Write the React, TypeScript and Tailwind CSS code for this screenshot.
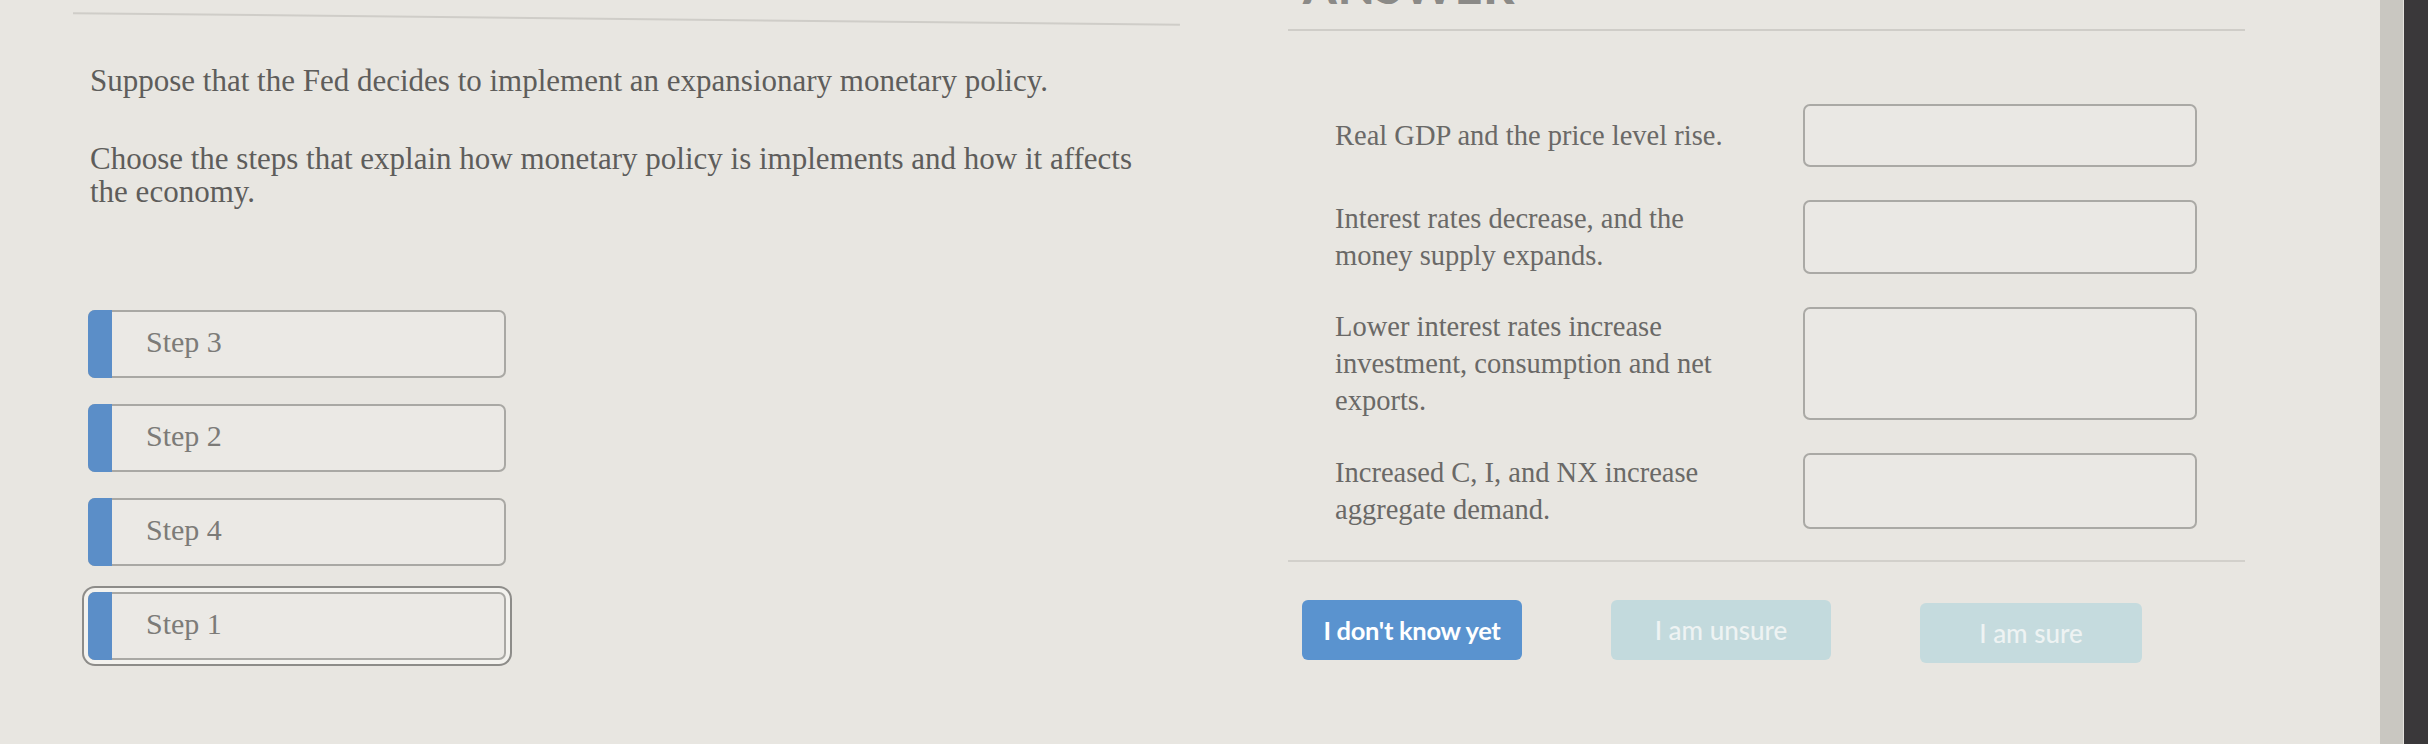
import React from "react";

const serif = "font-['Liberation_Serif',serif]";

const steps = [
  { label: "Step 3", focused: false },
  { label: "Step 2", focused: false },
  { label: "Step 4", focused: false },
  { label: "Step 1", focused: true },
];

const answers = [
  { lines: ["Real GDP and the price level rise."], h: "h-[63px]" },
  { lines: ["Interest rates decrease, and the", "money supply expands."], h: "h-[74px]" },
  {
    lines: ["Lower interest rates increase", "investment, consumption and net", "exports."],
    h: "h-[113px]",
  },
  { lines: ["Increased C, I, and NX increase", "aggregate demand."], h: "h-[76px]" },
];

const StepCard: React.FC<{ label: string; focused: boolean }> = ({ label, focused }) => (
  <div
    className={`ml-[15px] flex h-[68px] w-[418px] rounded-[7px] border-2 border-[#a9a8a4] bg-[#ebe9e5] ${
      focused ? "shadow-[0_0_0_4px_#f3f2ee,0_0_0_6px_#8d8c89]" : ""
    }`}
  >
    <div className="-my-[2px] -ml-[2px] w-[24px] rounded-l-[7px] bg-[#5b8ec8]" />
    <div className={`flex items-center pb-[5px] pl-[34px] text-[30px] text-[#7c7b78] ${serif}`}>{label}</div>
  </div>
);

export default function App() {
  return (
    <div className="flex h-[744px] w-[2428px] overflow-hidden bg-[#e8e6e1]">
      <div className="flex flex-1">
        {/* question */}
        <div className="ml-[73px] flex w-[1107px] flex-col">
          <div className="mt-[18px] h-[2px] rotate-[0.6deg] bg-[#cfcdc8]" />
          <div className={`mt-[44px] pl-[17px] text-[31px] leading-[33px] text-[#5e5d5b] ${serif}`}>
            <p>Suppose that the Fed decides to implement an expansionary monetary policy.</p>
            <p className="mt-[45px]">
              Choose the steps that explain how monetary policy is implements and how it affects
              <br />
              the economy.
            </p>
          </div>
          <div className="mt-[102px] flex flex-col gap-[26px]">
            {steps.map((s) => (
              <StepCard key={s.label} label={s.label} focused={s.focused} />
            ))}
          </div>
        </div>

        {/* answer */}
        <div className="ml-[108px] flex w-[957px] flex-col">
          <div className="flex h-[10px] items-end overflow-hidden pl-[15px]">
            <span className="font-['Lato',sans-serif] text-[48px] font-black leading-none tracking-[1px] text-[#8b8a87]">
              ANSWER
            </span>
          </div>
          <div className="mt-[19px] h-[2px] bg-[#cfcdc8]" />
          <div className="mt-[73px] flex flex-col gap-[33px]">
            {answers.map((a, i) => (
              <div key={i} className="flex items-center">
                <div className={`ml-[47px] w-[420px] text-[28.5px] leading-[37px] text-[#6a6967] ${serif}`}>
                  {a.lines.map((l, j) => (
                    <div key={j}>{l}</div>
                  ))}
                </div>
                <div className={`ml-[48px] w-[394px] rounded-[7px] border-2 border-[#aaa9a5] bg-[#eae8e4] ${a.h}`} />
              </div>
            ))}
          </div>
          <div className="mt-[31px] h-[2px] bg-[#d2d0cb]" />
          <div className="ml-[14px] mt-[38px] flex gap-[89px] font-['Lato',sans-serif]">
            <button className="h-[60px] w-[220px] rounded-[6px] bg-[#5a93cf] text-[25.5px] font-bold tracking-[-0.3px] text-white">
              I don't know yet
            </button>
            <button className="h-[60px] w-[220px] rounded-[6px] bg-[#c3dadd] text-[26px] font-medium text-[#eef3f3]">
              I am unsure
            </button>
            <button className="mt-[3px] h-[60px] w-[222px] rounded-[6px] bg-[#c5dbde] text-[26px] font-medium text-[#eef3f3]">
              I am sure
            </button>
          </div>
        </div>
      </div>

      {/* monitor bezel */}
      <div className="w-[23px] bg-[#c9c7c1]" />
      <div className="w-[1px] bg-[#e4e2dd]" />
      <div className="w-[24px] bg-[#3a383a]" />
    </div>
  );
}
